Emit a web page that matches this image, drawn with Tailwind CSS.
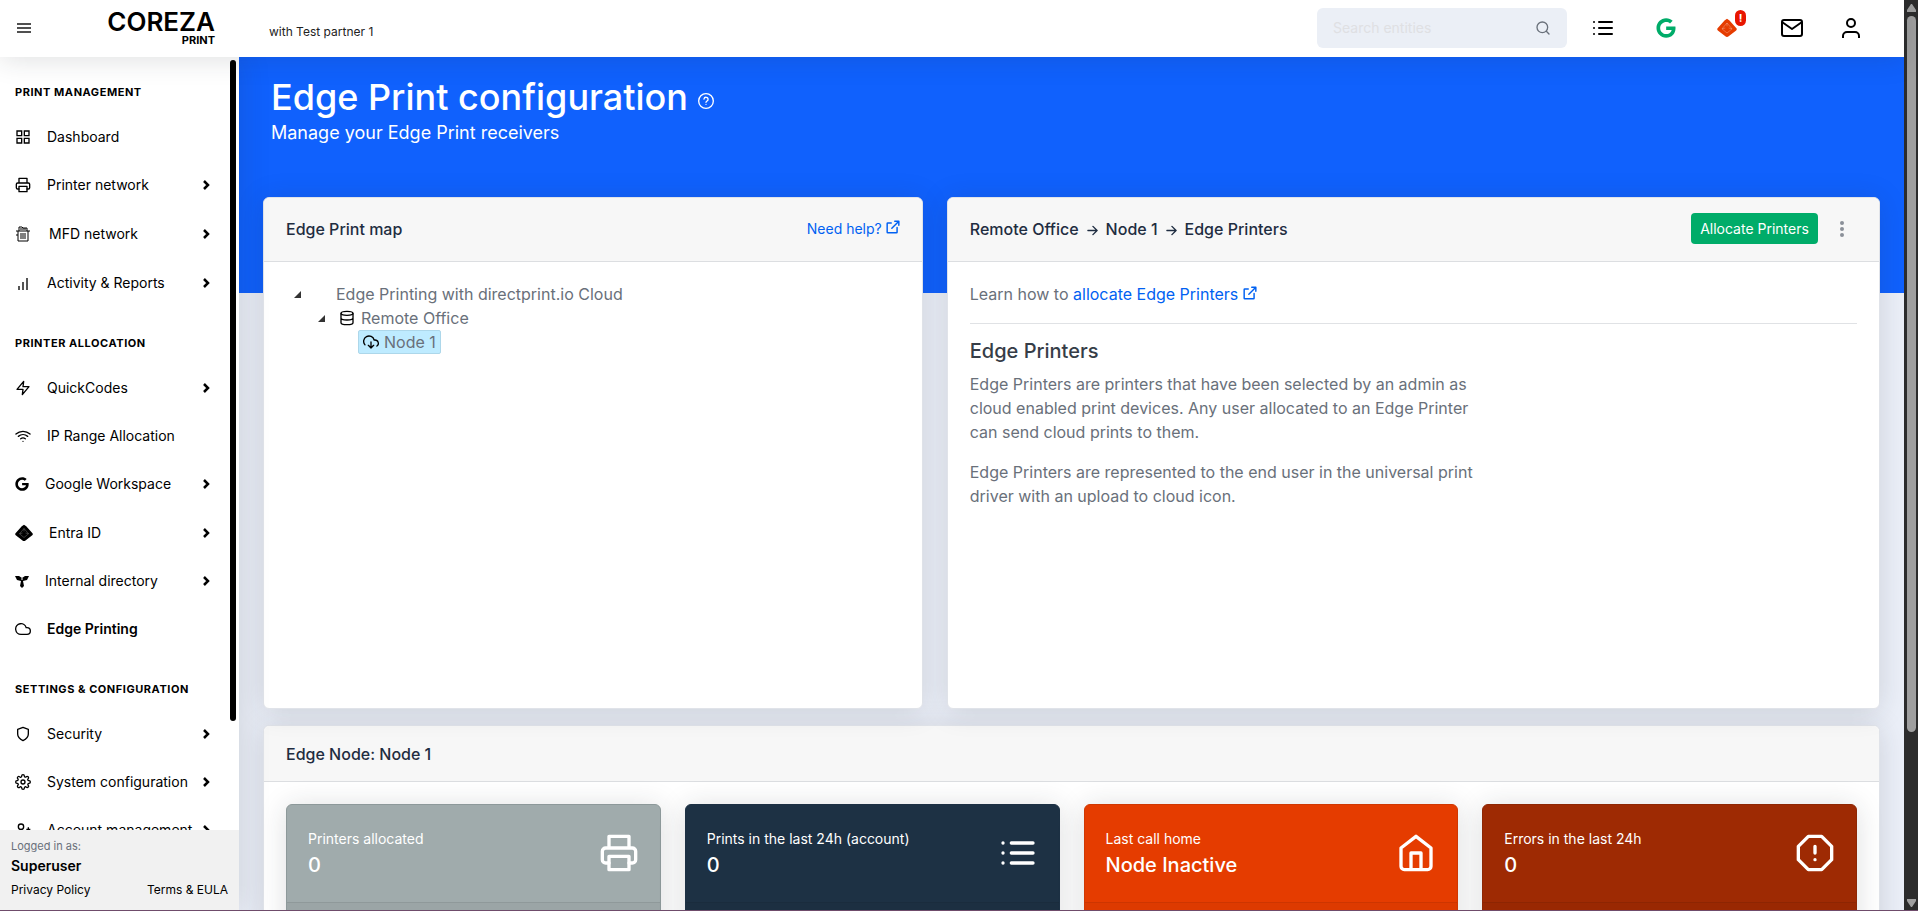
<!DOCTYPE html>
<html lang="en">
<head>
  <meta charset="UTF-8" />
  <meta name="viewport" content="width=device-width, initial-scale=1.0"/>
  <title>Edge Print configuration - Coreza Print</title>
  <script src="https://cdn.jsdelivr.net/npm/@tailwindcss/browser@4"></script>
</head>
<body class="h-screen overflow-hidden flex bg-[#ebeff8] text-[#69707a] font-['Inter',sans-serif]">

  <!-- Icon sprite -->
  <svg class="hidden">
    <symbol id="chevron" viewBox="0 0 24 24" fill="none" stroke="currentColor" stroke-width="5"><path d="M8 4l8 8-8 8"/></symbol>
    <symbol id="printer" viewBox="0 0 24 24" fill="none" stroke="currentColor" stroke-width="2" stroke-linecap="round" stroke-linejoin="round"><path d="M6 9V2h12v7M6 18H4a2 2 0 0 1-2-2v-5a2 2 0 0 1 2-2h16a2 2 0 0 1 2 2v5a2 2 0 0 1-2 2h-2"/><path d="M6 14h12v8H6z"/></symbol>
    <symbol id="list" viewBox="0 0 24 24" fill="none" stroke="currentColor" stroke-width="2" stroke-linecap="round"><path d="M8 6h13M8 12h13M8 18h13M3 6h.01M3 12h.01M3 18h.01"/></symbol>
    <symbol id="google" viewBox="0 0 488 512" fill="currentColor"><path d="M488 261.800C488 403.300 391.100 504 248 504 110.800 504 0 393.200 0 256S110.800 8 248 8c66.800 0 123 24.500 166.300 64.900l-67.500 64.900C258.500 52.600 94.300 116.600 94.300 256c0 86.500 69.100 156.600 153.700 156.600 98.200 0 135-70.400 140.800-106.900H248v-85.300h236.100c2.300 12.700 3.900 24.900 3.900 41.400z"/></symbol>
    <symbol id="entra" viewBox="0 0 24 24"><path fill="currentColor" d="M12 1l3 2 8 9c1 1 1 2 0 3l-9 7c-1 1-3 1-4 0l-9-7c-1-1-1-2 0-3l8-9z"/><path fill="none" stroke="#fff" stroke-opacity=".3" stroke-width="1" d="M12 6l-6 7 6 5 6-5zM12 6v4M6 13l4-1M18 13l-4-1"/></symbol>
    <symbol id="external" viewBox="0 0 24 24" fill="none" stroke="currentColor" stroke-width="2.500" stroke-linecap="round" stroke-linejoin="round"><path d="M19 13v8a1 1 0 0 1-1 1H3a1 1 0 0 1-1-1V6a1 1 0 0 1 1-1h6M15 2h7v7M10 14L22 2"/></symbol>
    <symbol id="arrow" viewBox="0 0 24 24" fill="none" stroke="currentColor" stroke-width="3" stroke-linecap="round" stroke-linejoin="round"><path d="M2 12h20M13 3l9 9-9 9"/></symbol>
  </svg>

  <div class="flex-1 min-w-0 flex flex-col">

    <!-- Top bar -->
    <header class="relative z-20 h-[57px] pb-px shrink-0 bg-white flex items-center shadow-[0_2px_28px_rgba(33,40,50,0.15)]">
      <div class="w-[239px] shrink-0 flex items-center justify-between pl-4 pr-6">
        <button class="text-[#505050]" aria-label="Toggle menu">
          <svg class="size-4" viewBox="0 0 16 16" fill="none" stroke="currentColor" stroke-width="2"><path d="M1 4h14M1 8h14M1 12h14"/></svg>
        </button>
        <a href="#" class="flex flex-col items-end text-black">
          <span class="text-[26px] leading-6 font-semibold">COREZA</span>
          <span class="text-[11px] leading-3 font-bold">PRINT</span>
        </a>
      </div>
      <p class="pl-[30px] pt-2 text-xs text-[#222]">with Test partner 1</p>
      <div class="ml-auto flex items-center pr-[41px]">
        <form class="flex items-center w-[250px] h-10 mr-6 px-4 rounded-md bg-[#ebeff6]">
          <input type="search" aria-label="Search entities" placeholder="Search entities" class="min-w-0 flex-1 text-sm outline-none placeholder:text-[#dfe0e3]">
          <button type="button" class="text-[#69707a]" aria-label="Search">
            <svg class="size-4" viewBox="0 0 24 24" fill="none" stroke="currentColor" stroke-width="2" stroke-linecap="round"><circle cx="11" cy="11" r="8"/><path d="M21 21l-4-4"/></svg>
          </button>
        </form>
        <nav class="flex items-center gap-[39px] text-black">
          <a href="#" aria-label="Tasks"><svg class="size-6"><use href="#list"/></svg></a>
          <a href="#" aria-label="Google" class="w-6 flex justify-center text-[#00ac69]"><svg class="size-5"><use href="#google"/></svg></a>
          <a href="#" aria-label="Entra ID" class="relative w-6 text-[#e53c00]">
            <svg class="size-5"><use href="#entra"/></svg>
            <span class="absolute -top-2 left-[18px] w-[11px] h-4 rounded-full bg-[#e81500] text-white text-[11px] leading-4 font-bold text-center">!</span>
          </a>
          <a href="#" aria-label="Messages"><svg class="size-6" viewBox="0 0 24 24" fill="none" stroke="currentColor" stroke-width="2" stroke-linejoin="round"><rect x="2" y="4" width="20" height="16" rx="2"/><path d="M2 6l10 7 10-7"/></svg></a>
          <a href="#" aria-label="Account" class="-ml-1"><svg class="size-6" viewBox="0 0 24 24" fill="none" stroke="currentColor" stroke-width="2"><path d="M20 22v-2a4 4 0 0 0-4-4H8a4 4 0 0 0-4 4v2"/><circle cx="12" cy="7" r="4"/></svg></a>
        </nav>
      </div>
    </header>

    <div class="flex-1 min-h-0 flex">

      <!-- Sidebar -->
      <aside class="relative z-10 w-[239px] shrink-0 flex flex-col bg-white text-black shadow-[2px_0_28px_rgba(33,40,50,0.15)]">
        <nav class="flex-1 min-h-0 overflow-hidden pl-[15px] pr-[27px] text-sm whitespace-nowrap">
          <h2 class="h-14 pt-[27px] text-[11px] leading-4 tracking-wider font-bold">PRINT MANAGEMENT</h2>
          <a href="#" class="h-12 flex items-center gap-4">
            <svg class="size-4" viewBox="0 0 24 24" fill="none" stroke="currentColor" stroke-width="2"><path d="M3 3h7v7H3zM14 3h7v7h-7zM14 14h7v7h-7zM3 14h7v7H3z"/></svg>
            Dashboard
          </a>
          <a href="#" class="h-12 flex items-center gap-4">
            <svg class="size-4"><use href="#printer"/></svg>
            Printer network <svg class="ml-auto size-3"><use href="#chevron"/></svg>
          </a>
          <a href="#" class="h-[49px] flex items-center gap-[18px]">
            <svg class="size-4" viewBox="0 0 16 16" fill="none" stroke="currentColor"><path d="M4 5V1h3l1 1h4v3M3 5v10h10V5M1 5h14M5 3h6M1 9h2M5 8h6M5 10h6M5 12h6"/></svg>
            MFD network <svg class="ml-auto size-3"><use href="#chevron"/></svg>
          </a>
          <a href="#" class="h-[49px] flex items-center gap-4">
            <svg class="size-4 text-[#555]" viewBox="0 0 16 16" fill="none" stroke="currentColor" stroke-width="2"><path d="M4 11v4M8 7v8M12 3v12"/></svg>
            Activity &amp; Reports <svg class="ml-auto size-3"><use href="#chevron"/></svg>
          </a>

          <h2 class="h-[57px] pt-[28px] text-[11px] leading-4 tracking-wider font-bold">PRINTER ALLOCATION</h2>
          <a href="#" class="h-12 flex items-center gap-4">
            <svg class="size-4" viewBox="0 0 24 24" fill="none" stroke="currentColor" stroke-width="2" stroke-linejoin="round"><path d="M13 2L3 14h9l-1 8 10-12h-9z"/></svg>
            QuickCodes <svg class="ml-auto size-3"><use href="#chevron"/></svg>
          </a>
          <a href="#" class="h-12 flex items-center gap-4">
            <svg class="size-4" viewBox="0 0 24 24" fill="none" stroke="currentColor" stroke-width="2" stroke-linecap="round"><path d="M5 12.550a11 11 0 0 1 14.080 0M1.420 9a16 16 0 0 1 21.160 0M8.530 16.110a6 6 0 0 1 6.950 0M12 20h.01"/></svg>
            IP Range Allocation
          </a>
          <a href="#" class="h-12 flex items-center gap-4">
            <svg class="size-[14px]"><use href="#google"/></svg>
            Google Workspace <svg class="ml-auto size-3"><use href="#chevron"/></svg>
          </a>
          <a href="#" class="h-[49px] flex items-center gap-4">
            <svg class="size-[18px]"><use href="#entra"/></svg>
            Entra ID <svg class="ml-auto size-3"><use href="#chevron"/></svg>
          </a>
          <a href="#" class="h-12 flex items-center gap-4">
            <svg class="size-[14px]" viewBox="0 0 14 14" fill="currentColor"><path d="M0 2h4l3 2 3-2h4l-2 4-4 1 1 5-2 2-2-2 1-5-4-1z"/><circle cx="7" cy="5" r="1" fill="#aaa"/></svg>
            Internal directory <svg class="ml-auto size-3"><use href="#chevron"/></svg>
          </a>
          <a href="#" class="h-12 flex items-center gap-4 font-semibold">
            <svg class="size-4" viewBox="0 0 24 24" fill="none" stroke="currentColor" stroke-width="2"><path d="M18 10h-1.260A8 8 0 1 0 9 20h9a5 5 0 0 0 0-10z"/></svg>
            Edge Printing
          </a>

          <h2 class="h-[57px] pt-[28px] text-[11px] leading-4 tracking-wider font-bold">SETTINGS &amp; CONFIGURATION</h2>
          <a href="#" class="h-12 flex items-center gap-4">
            <svg class="size-4" viewBox="0 0 24 24" fill="none" stroke="currentColor" stroke-width="2" stroke-linejoin="round"><path d="M12 22s8-4 8-10V5l-8-3-8 3v7c0 6 8 10 8 10z"/></svg>
            Security <svg class="ml-auto size-3"><use href="#chevron"/></svg>
          </a>
          <a href="#" class="h-12 flex items-center">
            <svg class="size-4 mr-4" viewBox="0 0 24 24" fill="none" stroke="currentColor" stroke-width="2"><circle cx="12" cy="12" r="3"/><path d="M19.400 15a1.650 1.650 0 0 0 .33 1.820l.06.06a2 2 0 1 1-2.830 2.830l-.06-.06a1.650 1.650 0 0 0-2.820 1.170V21a2 2 0 0 1-4 0v-.09A1.650 1.650 0 0 0 7.180 19.730l-.06.06a2 2 0 1 1-2.830-2.830l.06-.06A1.650 1.650 0 0 0 3.090 14H3a2 2 0 0 1 0-4h.09A1.650 1.650 0 0 0 4.270 7.180l-.06-.06a2 2 0 1 1 2.830-2.830l.06.06A1.650 1.650 0 0 0 10 3.090V3a2 2 0 0 1 4 0v.09a1.650 1.650 0 0 0 2.820 1.180l.06-.06a2 2 0 1 1 2.830 2.830l-.06.06A1.650 1.650 0 0 0 20.910 10H21a2 2 0 0 1 0 4h-.09a1.650 1.650 0 0 0-1.510 1z"/></svg>
            System configuration <svg class="ml-auto size-3"><use href="#chevron"/></svg>
          </a>
          <a href="#" class="h-12 flex items-center">
            <svg class="size-4 mr-4" viewBox="0 0 24 24" fill="none" stroke="currentColor" stroke-width="2"><path d="M16 21v-2a4 4 0 0 0-4-4H5a4 4 0 0 0-4 4v2M20 8v6M23 11h-6"/><circle cx="9" cy="7" r="4"/></svg>
            Account management <svg class="ml-auto size-3"><use href="#chevron"/></svg>
          </a>
        </nav>
        <div class="absolute top-[3px] right-[3px] w-[6px] h-[661px] rounded-full bg-black"></div>
        <footer class="h-[81px] shrink-0 bg-[#f1f1f1] px-[11px] pt-2 text-[13px]">
          <p class="text-[11px] leading-4 text-[#69707a]">Logged in as:</p>
          <p class="text-sm leading-6 font-semibold">Superuser</p>
          <div class="flex justify-between text-xs leading-6">
            <a href="#">Privacy Policy</a>
            <a href="#">Terms &amp; EULA</a>
          </div>
        </footer>
      </aside>

      <!-- Page -->
      <main class="flex-1 min-w-0 overflow-hidden">
        <div class="h-[236px] bg-[#1061fd] px-8 pt-5 text-white">
          <h1 class="flex items-center gap-[10px] text-4xl leading-10 font-medium">
            Edge Print configuration
            <svg class="size-4 mt-2" viewBox="0 0 24 24" fill="none" stroke="currentColor" stroke-width="2" stroke-linecap="round"><circle cx="12" cy="12" r="11"/><path d="M9 9a3 3 0 0 1 6 1c0 2-3 2-3 4M12 17h.01"/></svg>
          </h1>
          <p class="text-lg leading-8">Manage your Edge Print receivers</p>
        </div>

        <div class="-mt-24 px-6">
          <div class="grid grid-cols-12 gap-6">

            <!-- Tree -->
            <section class="col-span-5 h-[512px] rounded-md bg-white border border-[#e0e3e9] shadow-[0_2px_28px_rgba(33,40,50,0.15)]">
              <div class="h-16 px-[22px] pb-[2px] flex items-center justify-between rounded-t-md bg-[#f7f7f7] border-b border-[#dcdee1]">
                <h2 class="font-medium text-[#1f2d41]">Edge Print map</h2>
                <a href="#" class="flex items-center gap-1 text-sm text-[#0061f2]">Need help? <svg class="size-[14px] mb-1"><use href="#external"/></svg></a>
              </div>
              <ul class="pl-[30px] pt-5 leading-6">
                <li>
                  <div class="flex items-center"><svg class="size-[7px]" viewBox="0 0 7 7"><path d="M7 0v7H0z" fill="#333"/></svg><span class="pl-[35px]">Edge Printing with directprint.io Cloud</span></div>
                  <ul class="pl-6">
                    <li>
                      <div class="flex items-center"><svg class="size-[7px]" viewBox="0 0 7 7"><path d="M7 0v7H0z" fill="#333"/></svg>
                        <svg class="size-4 ml-[14px] mr-[6px] text-black" viewBox="0 0 24 24" fill="none" stroke="currentColor" stroke-width="2"><ellipse cx="12" cy="5" rx="9" ry="3"/><path d="M3 5v14c0 2 4 3 9 3s9-1 9-3V5M3 12c0 2 4 3 9 3s9-1 9-3"/></svg>
                        Remote Office</div>
                      <ul class="pl-10">
                        <li class="w-fit h-6 px-1 flex items-center gap-[5px] leading-5 rounded-xs bg-[#beebff] border border-[#add7ea]">
                          <svg class="size-4 text-black" viewBox="0 0 24 24" fill="none" stroke="currentColor" stroke-width="2" stroke-linecap="round" stroke-linejoin="round"><path d="M8 17l4 4 4-4M12 12v9M20.880 18.090A5 5 0 0 0 18 9h-1.260A8 8 0 1 0 3 16.290"/></svg>
                          Node 1
                        </li>
                      </ul>
                    </li>
                  </ul>
                </li>
              </ul>
            </section>

            <!-- Edge printers -->
            <section class="col-span-7 h-[512px] rounded-md bg-white border border-[#e0e3e9] shadow-[0_2px_28px_rgba(33,40,50,0.15)]">
              <div class="h-16 px-[22px] pb-[2px] flex items-center rounded-t-md bg-[#f7f7f7] border-b border-[#dcdee1]">
                <h2 class="flex items-center gap-2 font-medium text-[#1f2d41]">
                  Remote Office <svg class="size-[11px] mt-[3px]"><use href="#arrow"/></svg> Node 1 <svg class="size-[11px] mt-[3px]"><use href="#arrow"/></svg> Edge Printers
                </h2>
                <button class="ml-auto h-[31px] w-[127px] rounded bg-[#00ac69] text-sm text-white">Allocate Printers</button>
                <button class="ml-4 mr-[7px] text-[#8b9099]" aria-label="More"><svg class="size-4" viewBox="0 0 16 16" fill="currentColor"><circle cx="8" cy="2" r="2"/><circle cx="8" cy="8" r="2"/><circle cx="8" cy="14" r="2"/></svg></button>
              </div>
              <div class="px-[22px] pt-5 leading-6">
                <p class="pb-[17px] border-b border-[#e0e2e5]">Learn how to <a href="#" class="text-[#0061f2]">allocate Edge Printers <svg class="inline size-[14px] align-baseline"><use href="#external"/></svg></a></p>
                <h3 class="pt-[15px] pb-[9px] text-xl leading-6 font-medium text-[#363d47]">Edge Printers</h3>
                <p class="max-w-[520px] pb-4">Edge Printers are printers that have been selected by an admin as cloud enabled print devices. Any user allocated to an Edge Printer can send cloud prints to them.</p>
                <p class="max-w-[520px]">Edge Printers are represented to the end user in the universal print driver with an upload to cloud icon.</p>
              </div>
            </section>
          </div>

          <!-- Node stats -->
          <section class="mt-4 rounded-md bg-white border border-[#e0e3e9] shadow-[0_2px_28px_rgba(33,40,50,0.15)]">
            <div class="h-14 px-[22px] flex items-center rounded-t-md bg-[#f7f7f7] border-b border-[#dcdee1]">
              <h2 class="font-medium text-[#1f2d41]">Edge Node: Node 1</h2>
            </div>
            <div class="grid grid-cols-4 gap-6 p-[22px] text-white">
              <div class="rounded-md bg-[#a0abac] border border-[#8d999a] shadow-[0_2px_28px_rgba(33,40,50,0.15)]">
                <div class="h-[98px] px-[21px] pb-px flex items-center justify-between border-b border-black/10">
                  <div><p class="text-sm leading-6">Printers allocated</p><p class="text-xl leading-7 font-medium">0</p></div>
                  <svg class="size-10"><use href="#printer"/></svg>
                </div>
                <div class="h-12 rounded-b-md bg-black/3"></div>
              </div>
              <div class="rounded-md bg-[#1d3144] border border-[#1d3144] shadow-[0_2px_28px_rgba(33,40,50,0.15)]">
                <div class="h-[98px] px-[21px] pb-px flex items-center justify-between border-b border-black/10">
                  <div><p class="text-sm leading-6">Prints in the last 24h (account)</p><p class="text-xl leading-7 font-medium">0</p></div>
                  <svg class="size-10"><use href="#list"/></svg>
                </div>
                <div class="h-12 rounded-b-md bg-black/3"></div>
              </div>
              <div class="rounded-md bg-[#e53c00] border border-[#d03802] shadow-[0_2px_28px_rgba(33,40,50,0.15)]">
                <div class="h-[98px] px-[21px] pb-px flex items-center justify-between border-b border-black/10">
                  <div><p class="text-sm leading-6">Last call home</p><p class="text-xl leading-7 font-medium">Node Inactive</p></div>
                  <svg class="size-10" viewBox="0 0 24 24" fill="none" stroke="currentColor" stroke-width="2" stroke-linejoin="round"><path d="M3 9l9-7 9 7v11a2 2 0 0 1-2 2H5a2 2 0 0 1-2-2z"/><path d="M9 22V12h6v10"/></svg>
                </div>
                <div class="h-12 rounded-b-md bg-black/3"></div>
              </div>
              <div class="rounded-md bg-[#9e2a03] border border-[#8e2704] shadow-[0_2px_28px_rgba(33,40,50,0.15)]">
                <div class="h-[98px] px-[21px] pb-px flex items-center justify-between border-b border-black/10">
                  <div><p class="text-sm leading-6">Errors in the last 24h</p><p class="text-xl leading-7 font-medium">0</p></div>
                  <svg class="size-10" viewBox="0 0 24 24" fill="none" stroke="currentColor" stroke-width="2" stroke-linecap="round" stroke-linejoin="round"><path d="M8 2h8l6 6v8l-6 6H8l-6-6V8zM12 8v4M12 16h.01"/></svg>
                </div>
                <div class="h-12 rounded-b-md bg-black/3"></div>
              </div>
            </div>
          </section>
        </div>
      </main>
    </div>
  </div>

  <!-- Window scrollbar -->
  <div class="w-[14px] shrink-0 flex flex-col items-center justify-between bg-[#2c2c2c] py-1 text-[#9f9f9f]">
    <svg class="w-[9px] h-2 shrink-0" viewBox="0 0 9 8" fill="currentColor"><path d="M4 0h1l4 6v2H0V6z"/></svg>
    <div class="w-[9px] h-[716px] mt-1 mb-auto rounded-full bg-[#9f9f9f]"></div>
    <svg class="w-[9px] h-2 shrink-0" viewBox="0 0 9 8" fill="currentColor"><path d="M0 0h9v2L5 8H4L0 2z"/></svg>
  </div>
  <div class="absolute z-30 bottom-0 inset-x-0 h-px bg-[#6f4c6b]"></div>
</body>
</html>
